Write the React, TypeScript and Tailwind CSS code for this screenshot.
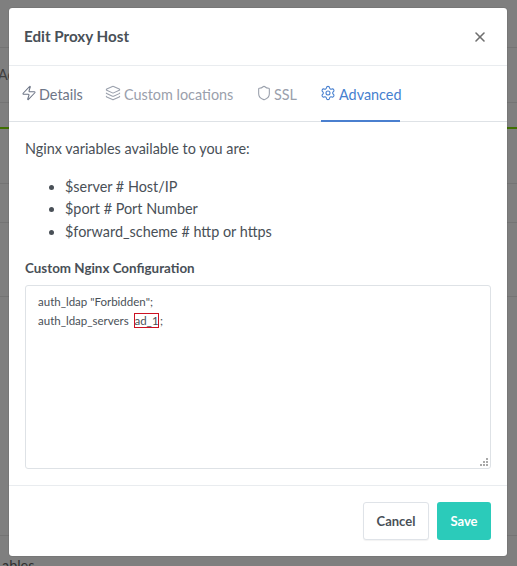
import { Zap, Layers, Shield, Settings, X } from "lucide-react";

function Tab({ icon, label, active, cls, gap }: { icon: React.ReactNode; label: string; active?: boolean; cls: string; gap: string }) {
  return (
    <div className={`-mb-px flex h-[56px] shrink-0 items-center whitespace-nowrap border-b-2 ${cls} ${active ? "border-[#4a7fcf] text-[#467fcf]" : "border-transparent"}`}>
      <span className={`-ml-px flex shrink-0 items-center ${gap}`}>{icon}</span>
      <span className="pt-[3px]">{label}</span>
    </div>
  );
}

export default function App() {
  return (
    <div className="relative h-[566px] w-[517px] overflow-hidden bg-[#7f7f7f] font-['Lato','Noto_Sans',sans-serif] text-[14.4px] text-[#495057]">
      <div className="flex flex-col">
        <div className="h-[48px] border-b border-[#747474]" />
        <div className="flex h-[55px] items-center border-b border-[#747474] text-[#3f3f3f]"><span className="-ml-[2px]">Ac</span></div>
        <div className="h-[26px] border-b-2 border-[#3f6f00]" />
        <div className="h-[55px] border-b border-[#747474]" />
        <div className="h-[39px] border-b border-[#747474]" />
        <div className="h-[74px] border-b border-[#747474]" />
        <div className="h-[239px] border-b border-[#747474]" />
        <div className="pl-[2px] pt-[20px] leading-[20px] text-[#2f2f2f]">ables</div>
      </div>

      <div className="absolute left-[9px] top-[8px] flex h-[548px] w-[498px] flex-col rounded-[3px] bg-white shadow-[0_0_1px_rgba(0,0,0,0.6)]">
        <div className="flex h-[58px] shrink-0 items-center justify-between border-b border-[#e9ecef] pl-[15px] pr-[19px]">
          <h2 className="text-[15.2px] font-bold text-[#495057]">Edit Proxy Host</h2>
          <X size={16} strokeWidth={2.4} className="text-[#6f6f6f]" />
        </div>

        <div className="flex h-[56px] shrink-0 items-center border-b border-[#dee2e6] pl-[13px] text-[#9aa0ac]">
          <Tab cls="w-[60px] text-[#6e7687]" gap="w-[18px]" icon={<Zap size={16} strokeWidth={1.6} />} label="Details" />
          <Tab cls="ml-[24px] w-[127px]" gap="w-[19px]" icon={<Layers size={16} strokeWidth={1.6} />} label="Custom locations" />
          <Tab cls="ml-[24px] w-[40px]" gap="w-[18px]" icon={<Shield size={16} strokeWidth={1.6} />} label="SSL" />
          <Tab cls="ml-[24px] w-[79px]" gap="w-[19px]" active icon={<Settings size={16} strokeWidth={1.6} />} label="Advanced" />
        </div>

        <div className="flex flex-1 flex-col px-[16px] pt-[15px]">
          <p className="leading-[24px]">Nginx variables available to you are:</p>
          <ul className="mt-[15px] list-disc pl-[40px] leading-[22.4px]">
            <li>$server # Host/IP</li>
            <li>$port # Port Number</li>
            <li>$forward_scheme # http or https</li>
          </ul>
          <label className="mt-[14px] block text-[13.4px] font-bold leading-[22px] text-[#495057]">Custom Nginx Configuration</label>
          <div className="relative mt-[6px] h-[184px] rounded-[3px] border border-[#dee2e6] px-[12px] pt-[6px] text-[11.5px] leading-[19px] text-[#495057]">
            <div>auth_ldap "Forbidden";</div>
            <div className="flex items-center">
              <span className="w-[96px] shrink-0">auth_ldap_servers</span>
              <span className="flex h-[15px] w-[25px] shrink-0 items-center justify-center border border-[#cc1122]">ad_1</span>
              <span className="ml-px">;</span>
            </div>
            <svg className="absolute bottom-[1px] right-[1px]" width="10" height="10" viewBox="0 0 10 10" fill="#a9a9a9">
              <rect x="7" y="1" width="2" height="2" /><rect x="4" y="4" width="2" height="2" /><rect x="7" y="4" width="2" height="2" />
              <rect x="1" y="7" width="2" height="2" /><rect x="4" y="7" width="2" height="2" /><rect x="7" y="7" width="2" height="2" />
            </svg>
          </div>
        </div>

        <div className="flex h-[71px] shrink-0 items-center justify-end gap-[8px] border-t border-[#e9ecef] pr-[16px]">
          <button className="h-[38px] w-[66px] rounded-[3px] border border-[#dfe3e8] bg-white pt-[2px] text-[13px] font-bold text-[#495057] shadow-[0_1px_1px_rgba(0,0,0,0.05)]">Cancel</button>
          <button className="h-[38px] w-[54px] rounded-[3px] bg-[#2bcbba] pt-[2px] text-[13px] font-bold text-white">Save</button>
        </div>
      </div>
    </div>
  );
}
